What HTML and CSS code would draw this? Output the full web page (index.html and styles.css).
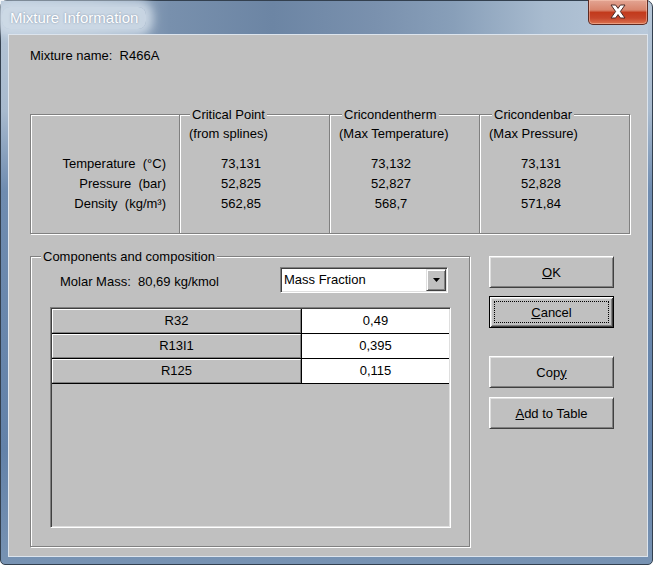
FILE: index.html
```html
<!DOCTYPE html>
<html lang="en">
<head>
<meta charset="utf-8">
<title>Mixture Information</title>
<link rel="stylesheet" href="styles.css">
</head>
<body>
<div class="window">
  <div class="titlebar">
    <span class="title">Mixture Information</span>
    <button class="close" aria-label="Close">
      <svg width="16" height="15" viewBox="0 0 16 15"><path d="M1 1 H5.6 L8 4.4 L10.4 1 H15 L10.4 7.5 L15 14 H10.4 L8 10.6 L5.6 14 H1 L5.6 7.5 Z" fill="#fff" stroke="#4a2a26" stroke-width="1" stroke-linejoin="round"/></svg>
    </button>
  </div>
  <div class="client">
    <div class="mixname">Mixture name:  R466A</div>

    <div class="props">
      <div class="etched col labels">
        <div class="line">Temperature  (°C)</div>
        <div class="line">Pressure  (bar)</div>
        <div class="line">Density  (kg/m³)</div>
      </div>
      <div class="etched col">
        <div class="cap cap-cp">Critical Point</div>
        <div class="sub">(from splines)</div>
        <div class="vals">
          <div class="line">73,131</div>
          <div class="line">52,825</div>
          <div class="line">562,85</div>
        </div>
      </div>
      <div class="etched col">
        <div class="cap">Cricondentherm</div>
        <div class="sub">(Max Temperature)</div>
        <div class="vals">
          <div class="line">73,132</div>
          <div class="line">52,827</div>
          <div class="line">568,7</div>
        </div>
      </div>
      <div class="etched col">
        <div class="cap">Cricondenbar</div>
        <div class="sub">(Max Pressure)</div>
        <div class="vals">
          <div class="line">73,131</div>
          <div class="line">52,828</div>
          <div class="line">571,84</div>
        </div>
      </div>
    </div>

    <div class="lower">
      <div class="etched comp">
        <div class="cap cap-comp">Components and composition</div>
        <div class="molar-row">
          <span class="molar">Molar Mass:  80,69 kg/kmol</span>
          <div class="combo">
            <span class="combo-text">Mass Fraction</span>
            <span class="drop"><svg width="7" height="4" viewBox="0 0 7 4"><path d="M0 0 H7 L3.5 4 Z" fill="#000"/></svg></span>
          </div>
        </div>
        <div class="grid">
          <div class="row"><div class="hcell">R32</div><div class="dcell">0,49</div></div>
          <div class="row"><div class="hcell">R13I1</div><div class="dcell">0,395</div></div>
          <div class="row"><div class="hcell">R125</div><div class="dcell">0,115</div></div>
        </div>
      </div>
      <div class="buttons">
        <button class="btn"><u>O</u>K</button>
        <button class="btn btn-default"><u>C</u>ancel</button>
        <button class="btn btn-copy">Cop<u>y</u></button>
        <button class="btn btn-add"><u>A</u>dd to Table</button>
      </div>
    </div>
  </div>
</div>
</body>
</html>
```

FILE: styles.css
```css
html, body {
  margin: 0;
  padding: 0;
  background: #ffffff;
}

body {
  font-family: "Liberation Sans", Arial, sans-serif;
  font-size: 13px;
  color: #000;
}

.window {
  width: 653px;
  height: 565px;
  box-sizing: border-box;
  border: 1px solid #33404f;
  border-radius: 7px 7px 5px 5px;
  padding: 0 4px 7px 7px;
  display: flex;
  flex-direction: column;
  background:
    linear-gradient(180deg, #b7c7d8 0px, #a8bace 110px, #6f8cb0 190px, #6382a9 450px, #7893b3 565px);
}

.titlebar {
  height: 33px;
  display: flex;
  justify-content: space-between;
  align-items: flex-start;
  background: linear-gradient(90deg, #b6c6d8 0%, #a4b6ca 14%, #7890ad 26%, #6c85a4 42%, #7a91ae 58%, #889fb9 70%, #a8bbcf 84%, #b9c9da 100%);
  margin-left: -7px;
  padding-left: 7px;
}

.title {
  align-self: center;
  margin-left: -6px;
  margin-top: 1px;
  padding: 2px 8px;
  color: #ffffff;
  font-size: 15px;
  line-height: 18px;
  background: rgba(206, 218, 231, 0.9);
  border-radius: 8px;
  box-shadow: 0 0 10px 7px rgba(206, 218, 231, 0.9);
  text-shadow: 0 0 2px rgba(70, 90, 120, 0.6);
}

.close {
  width: 60px;
  height: 25px;
  margin-top: -1px;
  padding: 0;
  box-sizing: border-box;
  border: 1px solid #5d2a22;
  border-top: none;
  border-radius: 0 0 5px 5px;
  background: linear-gradient(180deg, #e3a593 0%, #d8846c 42%, #c23a1c 52%, #c6452a 75%, #dc734f 100%);
  box-shadow: inset 0 0 0 1px rgba(255, 210, 190, 0.45);
  display: flex;
  align-items: center;
  justify-content: center;
}

.close svg {
  display: block;
  margin-top: -1px;
}

.client {
  flex: 1;
  background: #c0c0c0;
  border: 1px solid #dce4ed;
  display: flex;
  flex-direction: column;
}

.mixname {
  margin: 13px 0 0 21px;
  line-height: 15px;
  white-space: pre;
}

.line {
  line-height: 20px;
  white-space: pre;
}

/* etched group box edge */
.etched {
  border: 1px solid #808080;
  box-shadow: inset 1px 1px 0 #ffffff, 1px 1px 0 #ffffff;
  box-sizing: border-box;
}

.props {
  display: flex;
  margin: 51px 0 0 21px;
}

.col {
  width: 151px;
  height: 120px;
  margin-left: -1px;
}

.col.labels {
  width: 150px;
  margin-left: 0;
  padding: 39px 13px 0 0;
  text-align: right;
}

.cap {
  width: fit-content;
  margin: -8px 0 0 12px;
  padding: 0 2px;
  line-height: 15px;
  background: #c0c0c0;
  white-space: nowrap;
}

.cap-cp {
  margin-left: 10px;
}

.sub {
  margin: 4px 0 0 9px;
  line-height: 15px;
  white-space: nowrap;
}

.vals {
  width: 122px;
  margin-top: 13px;
  text-align: center;
}

.lower {
  display: flex;
  align-items: flex-start;
  margin: 22px 0 0 21px;
}

.comp {
  width: 440px;
  height: 291px;
  padding: 0 17px 0 19px;
}

.cap-comp {
  margin-left: -9px;
}

.molar-row {
  display: flex;
  align-items: center;
  margin-top: 3px;
}

.molar {
  width: 230px;
  padding-left: 10px;
  box-sizing: border-box;
  white-space: pre;
  margin-top: 2px;
}

.combo {
  width: 168px;
  height: 26px;
  box-sizing: border-box;
  display: flex;
  align-items: stretch;
  background: #ffffff;
  border: 1px solid;
  border-color: #808080 #ffffff #ffffff #808080;
  box-shadow: inset 1px 1px 0 #404040, inset -1px -1px 0 #dfdfdf;
  padding: 1px;
}

.combo-text {
  flex: 1;
  padding-left: 2px;
  line-height: 22px;
}

.drop {
  width: 20px;
  box-sizing: border-box;
  background: #c0c0c0;
  border: 1px solid;
  border-color: #dfdfdf #404040 #404040 #dfdfdf;
  box-shadow: inset 1px 1px 0 #ffffff, inset -1px -1px 0 #808080;
  display: flex;
  align-items: center;
  justify-content: center;
}

.drop svg {
  display: block;
}

.grid {
  margin-top: 14px;
  width: 401px;
  height: 221px;
  box-sizing: border-box;
  border: 1px solid;
  border-color: #808080 #ffffff #ffffff #808080;
  box-shadow: inset 1px 1px 0 #404040, inset -1px -1px 0 #dfdfdf;
  padding: 1px;
  background: #c0c0c0;
}

.row {
  display: flex;
  height: 25px;
  box-sizing: border-box;
  border-bottom: 1px solid #000;
}

.hcell {
  width: 249px;
  box-sizing: border-box;
  border: 1px solid;
  border-color: #ffffff #808080 #808080 #ffffff;
  text-align: center;
  line-height: 22px;
}

.dcell {
  flex: 1;
  background: #ffffff;
  border-left: 1px solid #000;
  text-align: center;
  line-height: 24px;
}

.buttons {
  display: flex;
  flex-direction: column;
  margin-left: 19px;
}

.btn {
  width: 125px;
  height: 32px;
  padding: 0;
  font: inherit;
  color: #000;
  background: #c0c0c0;
  box-sizing: border-box;
  border: 1px solid;
  border-color: #ffffff #404040 #404040 #ffffff;
  box-shadow: inset 1px 1px 0 #dfdfdf, inset -1px -1px 0 #808080;
}

.btn u {
  text-underline-offset: 1px;
}

.btn-default {
  margin-top: 8px;
  border-color: #000;
  box-shadow: inset 1px 1px 0 #ffffff, inset -1px -1px 0 #404040, inset 2px 2px 0 #dfdfdf, inset -2px -2px 0 #808080;
  outline: 1px dotted #000;
  outline-offset: -6px;
}

.btn-copy {
  margin-top: 28px;
}

.btn-add {
  margin-top: 9px;
}
```
